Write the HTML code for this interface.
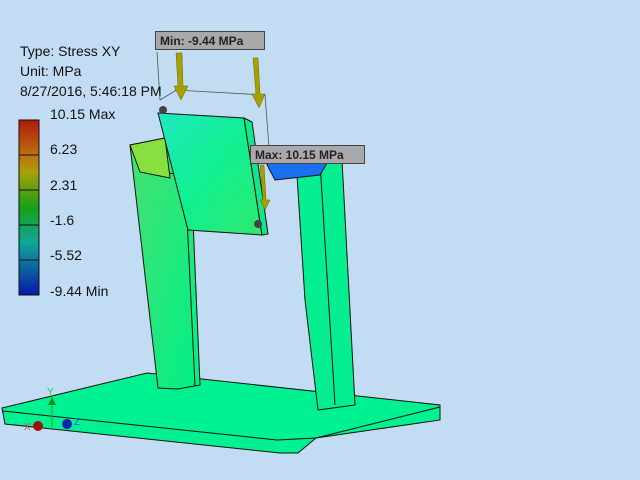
<!DOCTYPE html>
<html><head><style>
body{margin:0;width:640px;height:480px;background:#c2dcf3;overflow:hidden;position:relative;font-family:"Liberation Sans",sans-serif}
.t{position:absolute;font-size:14px;color:#111}
.lbl{position:absolute;background:#a9a9ab;border:1px solid #444;font-size:12px;font-weight:bold;color:#222;padding:2px 4px 1px 4px}
</style></head><body>
<svg width="640" height="480" style="position:absolute;left:0;top:0">
<defs>
<linearGradient id="leg" x1="0" y1="0" x2="1" y2="1"><stop offset="0" stop-color="#48e070"/><stop offset="1" stop-color="#00f088"/></linearGradient>
<linearGradient id="plate" x1="0" y1="0" x2="1" y2="1"><stop offset="0" stop-color="#20e8c0"/><stop offset="0.5" stop-color="#10f090"/><stop offset="1" stop-color="#30e870"/></linearGradient>
<linearGradient id="bar" x1="0" y1="0" x2="0" y2="1"><stop offset="0" stop-color="#b01808"/><stop offset="0.2" stop-color="#c07010"/><stop offset="0.3" stop-color="#a8a008"/><stop offset="0.5" stop-color="#18a018"/><stop offset="0.7" stop-color="#10a898"/><stop offset="1" stop-color="#0818a8"/></linearGradient>
</defs>
<g stroke="#111" stroke-width="1">
<polygon points="2,408 147,373 440,405 440,420 316,438 298,453 280,453 5,424" fill="#00f290"/>
<polyline points="3,411 277,440 316,438 440,407" fill="none"/>
<polygon points="296,160 342,160 355,405 318,410 305,300" fill="#05ee90"/>
<polyline points="320,162 335,405" fill="none"/>
<polygon points="262,155 330,158 320,175 275,180" fill="#1a70f0"/>
<polygon points="130,145 165,138 190,150 200,385 178,389 158,388" fill="url(#leg)"/>
<polyline points="140,170 185,175 195,386" fill="none"/>
<polygon points="130,145 165,138 170,178 140,172" fill="#88e040"/>
<polygon points="158,113 244,118 262,235 188,230" fill="url(#plate)"/>
<polygon points="244,118 252,122 268,234 262,235" fill="#10e890"/>
</g>
<g fill="none" stroke="#555" stroke-width="0.8">
<polyline points="175,90 265,95 270,160"/><polyline points="160,100 180,88"/>
<polyline points="157,52 160,100"/>
</g>
<g fill="#a6a000" stroke="#6a6600" stroke-width="0.5">
<polygon points="176,53 182,53 183,86 188,86 181,100 174,86 178,86"/>
<polygon points="253,58 258,58 260,94 265,94 259,108 252,94 256,94"/>
<polygon points="260,165 264,165 266,200 270,200 265,210 260,200 263,200"/>
</g>
<circle cx="163" cy="110" r="4" fill="#444"/><circle cx="258" cy="224" r="4" fill="#444"/>
<rect x="19" y="120" width="20" height="175" fill="url(#bar)" stroke="#111"/>
<g stroke="#111"><line x1="19" y1="155" x2="39" y2="155"/><line x1="19" y1="190" x2="39" y2="190"/><line x1="19" y1="225" x2="39" y2="225"/><line x1="19" y1="260" x2="39" y2="260"/></g>
<line x1="52" y1="395" x2="52" y2="427" stroke="#2a2" stroke-width="1"/>
<polygon points="48,405 52,397 56,405" fill="#1a8a1a"/>
<text x="47" y="395" font-size="10" fill="#3c3" font-family="Liberation Sans">Y</text>
<circle cx="38" cy="426" r="5" fill="#a01010"/><text x="24" y="430" font-size="10" fill="#d44" font-family="Liberation Sans">X</text>
<circle cx="67" cy="424" r="5" fill="#1020b0"/><text x="74" y="425" font-size="10" fill="#26e" font-family="Liberation Sans">Z</text>
</svg>
<div class="t" style="left:20px;top:43px">Type: Stress XY</div>
<div class="t" style="left:20px;top:63px">Unit: MPa</div>
<div class="t" style="left:20px;top:83px">8/27/2016, 5:46:18 PM</div>
<div class="t" style="left:50px;top:106px">10.15 Max</div>
<div class="t" style="left:50px;top:141px">6.23</div>
<div class="t" style="left:50px;top:177px">2.31</div>
<div class="t" style="left:50px;top:212px">-1.6</div>
<div class="t" style="left:50px;top:247px">-5.52</div>
<div class="t" style="left:50px;top:283px">-9.44 Min</div>
<div class="lbl" style="left:155px;top:31px;width:100px">Min: -9.44 MPa</div>
<div class="lbl" style="left:250px;top:145px;width:105px">Max: 10.15 MPa</div>
</body></html>
